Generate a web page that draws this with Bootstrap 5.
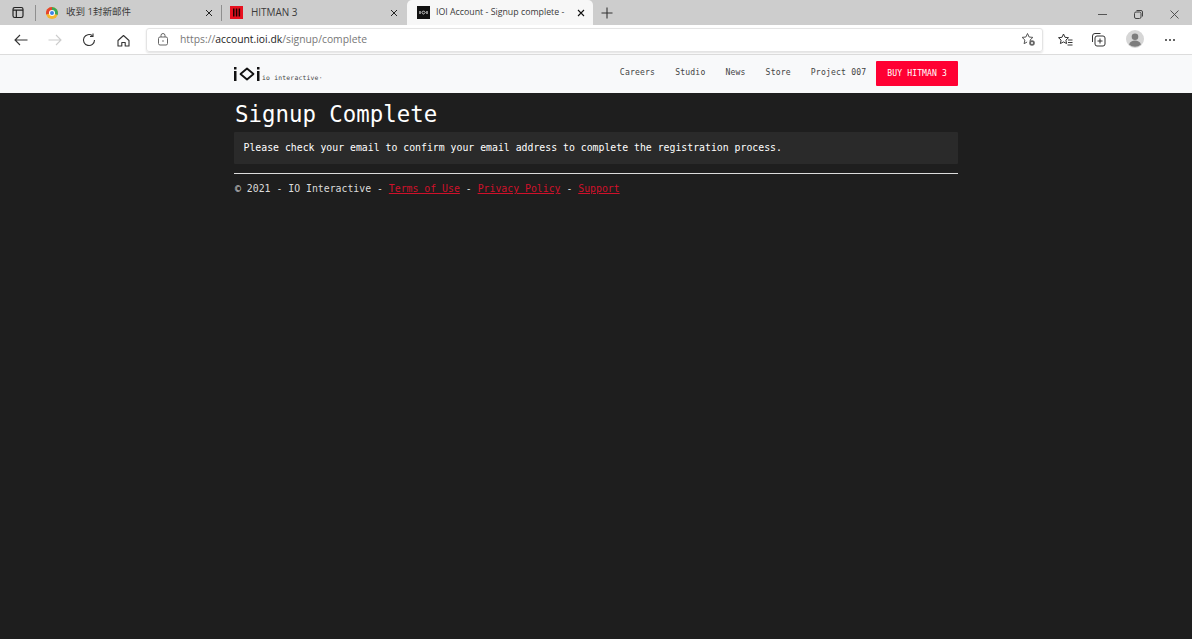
<!DOCTYPE html>
<html lang="en">
<head>
<meta charset="utf-8">
<title>IOI Account - Signup complete</title>
<link rel="stylesheet" href="https://cdn.jsdelivr.net/npm/bootstrap@5.3.0/dist/css/bootstrap.min.css">
<style>
html,body{height:100%}
body{background:#1e1e1e;font-family:"DejaVu Sans Mono","Liberation Mono",monospace;overflow:hidden}
.chrome{font-family:"Open Sans","Noto Sans","Noto Sans CJK SC",sans-serif;color:#333}
.tabbar{height:25px;background:#cdcdcd}
.winbtn{width:36px}
.tabsq{width:18px;margin-left:9px;margin-right:4px}
.vsep{width:1px;height:16px;background:#8f8f8f}
.browser-tab{height:25px;font-size:9.5px;color:#3b3b3b;white-space:nowrap}
.tab-a{width:185px;padding-left:9px;padding-right:8px}
.tab-b{width:185px;padding-left:8px;padding-right:9px;font-size:9.95px}
.tab-c{width:186px;padding-left:10px;padding-right:8px;background:#f7f7f7;border-radius:5px 5px 0 0;font-size:8.8px}
.tab-title{padding-left:7px;overflow:hidden}
.tab-title-wide{padding-left:8px}
.tab-title-c{padding-left:6px}
.toolbar{height:30px;background:#fff;border-bottom:1px solid #dcdcdc}
.tool{width:34px;flex:none;line-height:1;position:relative;top:-1px}
.tool-star{margin-left:5px}
.tool-coll{margin-left:-1px}
.tool-user{margin-left:3px}
.tool-more{margin-left:1px}
.addr{width:897px;height:24px;margin-left:6px;border:1px solid #e4e4e4;border-radius:3px;font-size:10.35px;color:#777;padding:0 6px 0 10px;box-shadow:0 1px 2px rgba(0,0,0,.12)}
.addr b{font-weight:400;color:#222}
.url-text{margin-left:11px}
.site-nav{height:38px;background:#f8f9fa}
.wrap{width:724px;margin:0 auto}
.logo-word{font-size:6.4px;color:#444;letter-spacing:.2px;margin-left:2px;margin-top:9px}
.site-links{padding-bottom:2px}
.site-link{font-size:8.1px;color:#444;text-decoration:none;margin-right:20px;letter-spacing:.17px;white-space:nowrap;line-height:10px;padding-bottom:2px}
.buy{background:#ff0033;color:#fff;font-size:8.1px;padding:0 11px;height:25px;line-height:25px;border-radius:1px;text-decoration:none;letter-spacing:.1px;margin-left:-10px;white-space:nowrap}
.page-title{font-size:22.4px;font-weight:400;color:#fff;line-height:28px;margin:7px 0 4px 1px;letter-spacing:0}
.msg{background:#2a2a2a;color:#fff;font-size:9.83px;height:32px;line-height:31px;padding-left:9.5px;border-radius:1px}
.rule{border:0;border-top:1px solid #dcdcdc;opacity:1;margin:9px 0 0}
.foot{font-size:9.83px;color:#dcdcdc;margin-top:9px;line-height:12px;padding-left:1px}
.foot a{color:#d0112b}
</style>
</head>
<body>
<div class="chrome">
  <div class="tabbar d-flex align-items-center">
    <svg class="tabsq" viewBox="0 0 18 18" height="15"><rect x="3" y="3" width="12" height="12" rx="2" fill="none" stroke="#222" stroke-width="1.400"/><path d="M3 6.200h12M7 6.200V15" stroke="#222" stroke-width="1.400"/></svg>
    <span class="vsep ms-1"></span>
    <div class="browser-tab tab-a d-flex align-items-center">
      <svg width="14" height="14" viewBox="0 0 14 14" class="flex-none"><circle cx="7" cy="7" r="6" fill="#f5b52e"/><path d="M7 1a6 6 0 0 1 5.600 8L7 7z" fill="#3aa757"/><path d="M1.200 8.500A6 6 0 0 1 7 1v6z" fill="#e5432e"/><circle cx="7" cy="7" r="3" fill="#fff"/><circle cx="7" cy="7" r="2" fill="#3b82e6"/></svg>
      <span class="tab-title flex-grow-1">收到 1封新邮件</span>
      <svg width="8" height="8" viewBox="0 0 8 8"><path d="M1 1l6 6M7 1L1 7" stroke="#222" stroke-width="1"/></svg>
    </div>
    <span class="vsep"></span>
    <div class="browser-tab tab-b d-flex align-items-center">
      <svg width="13" height="13" viewBox="0 0 13 13" class="flex-none"><rect width="13" height="13" fill="#e8101f"/><path d="M3 2.500h1.500v8H3zM5.800 2.500h1.500v8H5.800zM8.600 2.500h1.500v8H8.600z" fill="#200"/></svg>
      <span class="tab-title tab-title-wide flex-grow-1">HITMAN 3</span>
      <svg width="8" height="8" viewBox="0 0 8 8"><path d="M1 1l6 6M7 1L1 7" stroke="#222" stroke-width="1"/></svg>
    </div>
    <div class="browser-tab tab-c d-flex align-items-center">
      <svg width="13" height="13" viewBox="0 0 13 13" class="flex-none"><rect width="13" height="13" fill="#111"/><path d="M3 5v3M10 5v3" stroke="#fff"/><path d="M6.500 4.800l1.700 1.700-1.700 1.700-1.700-1.700z" fill="none" stroke="#fff" stroke-width=".8"/></svg>
      <span class="tab-title tab-title-c flex-grow-1">IOI Account - Signup complete -</span>
      <svg width="8" height="8" viewBox="0 0 8 8"><path d="M1 1l6 6M7 1L1 7" stroke="#111" stroke-width="1.100"/></svg>
    </div>
    <svg width="12" height="12" viewBox="0 0 12 12" class="ms-2"><path d="M6 .5v11M.5 6h11" stroke="#333" stroke-width="1.100"/></svg>
    <div class="ms-auto d-flex align-items-center">
      <div class="winbtn text-center"><svg width="9" height="9" viewBox="0 0 9 9"><path d="M0 4.500h9" stroke="#555"/></svg></div>
      <div class="winbtn text-center"><svg width="9" height="9" viewBox="0 0 9 9"><rect x=".5" y="2" width="6.500" height="6.500" rx="1.500" fill="none" stroke="#444"/><path d="M2.500 .5H7A1.500 1.500 0 0 1 8.500 2v4.500" fill="none" stroke="#444"/></svg></div>
      <div class="winbtn text-center"><svg width="9" height="9" viewBox="0 0 9 9"><path d="M.5.5l8 8M8.500.5l-8 8" stroke="#444" stroke-width=".9"/></svg></div>
    </div>
  </div>
  <div class="toolbar d-flex align-items-center ps-1">
    <div class="tool text-center"><svg width="14" height="12" viewBox="0 0 14 12"><path d="M13.500 6H1M6 1L1 6l5 5" fill="none" stroke="#333" stroke-width="1.100"/></svg></div>
    <div class="tool text-center"><svg width="14" height="12" viewBox="0 0 14 12"><path d="M.5 6H13M8 1l5 5-5 5" fill="none" stroke="#ccc" stroke-width="1.100"/></svg></div>
    <div class="tool text-center"><svg width="14" height="14" viewBox="0 0 14 14"><path d="M12.500 7A5.500 5.500 0 1 1 10.500 2.800" fill="none" stroke="#333" stroke-width="1.100"/><path d="M11 .5v3H8" fill="none" stroke="#333" stroke-width="1.100"/></svg></div>
    <div class="tool text-center"><svg width="13" height="13" viewBox="0 0 13 13"><path d="M1 6.500L6.500 1.500 12 6.500V12H8.200V8.500H4.800V12H1z" fill="none" stroke="#333" stroke-width="1.100" stroke-linejoin="round"/></svg></div>
    <div class="addr d-flex align-items-center">
      <svg width="12" height="13" viewBox="0 0 12 13"><rect x="1.500" y="4" width="9" height="8" rx="1.500" fill="none" stroke="#666"/><path d="M4 4V2.500a2 2 0 0 1 4 0V4" fill="none" stroke="#666"/><circle cx="6" cy="8" r=".8" fill="#666"/></svg>
      <span class="url-text">https://<b>account.ioi.dk</b>/signup/complete</span>
      <svg class="ms-auto" width="15" height="15" viewBox="0 0 15 15"><path d="M6.500 1.500l1.600 3.500 3.800.4-2.800 2.600.7 3.700" fill="none" stroke="#555"/><path d="M6.500 1.500L4.900 5l-3.800.4L3.900 8l-.8 3.700 3-1.700" fill="none" stroke="#555"/><circle cx="11" cy="11" r="2.800" fill="#666"/><circle cx="11" cy="11" r="1" fill="#fff"/></svg>
    </div>
    <div class="tool tool-star text-center"><svg width="15" height="14" viewBox="0 0 15 14"><path d="M5.500 1l1.500 3.300 3.500.4-2.600 2.400.7 3.500-3.100-1.700-3.100 1.700.7-3.500L.5 4.700 4 4.300z" fill="none" stroke="#333"/><path d="M10 7h4.500M10 9.500h4.500M9.500 12h5" stroke="#333"/></svg></div>
    <div class="tool tool-coll text-center"><svg width="15" height="15" viewBox="0 0 15 15"><rect x="4" y="4" width="10" height="10" rx="2" fill="none" stroke="#333"/><path d="M9 6.500v5M6.500 9h5" stroke="#333"/><path d="M1.500 10V4A2.500 2.500 0 0 1 4 1.500h5.500" fill="none" stroke="#333"/></svg></div>
    <div class="tool tool-user text-center"><svg width="18" height="18" viewBox="0 0 18 18"><circle cx="9" cy="9" r="9" fill="#d6d6d6"/><circle cx="9" cy="6.800" r="3.300" fill="#7d7d7d"/><path d="M3 14.500c1-3 3.500-4 6-4s5 1 6 4a9 9 0 0 1-12 0z" fill="#7d7d7d"/></svg></div>
    <div class="tool tool-more text-center"><svg width="12" height="4" viewBox="0 0 12 4"><circle cx="2" cy="2" r="1" fill="#333"/><circle cx="6" cy="2" r="1" fill="#333"/><circle cx="10" cy="2" r="1" fill="#333"/></svg></div>
  </div>
</div>
<nav class="site-nav">
  <div class="wrap h-100 d-flex align-items-center">
    <svg width="26" height="14" viewBox="0 0 26 14" aria-label="IOI"><rect x="0" y="4" width="2.500" height="10" fill="#111"/><rect x="0" y="0" width="2.500" height="2.500" fill="#111"/><path d="M13 1.500L19.500 7 13 12.500 6.500 7z" fill="none" stroke="#111" stroke-width="1.800" stroke-linejoin="round"/><rect x="23" y="4" width="2.500" height="10" fill="#111"/><rect x="23" y="0" width="2.500" height="2.500" fill="#111"/></svg>
    <span class="logo-word">io interactive·</span>
    <div class="ms-auto d-flex align-items-center site-links">
      <a class="site-link" href="#">Careers</a><a class="site-link" href="#">Studio</a><a class="site-link" href="#">News</a><a class="site-link" href="#">Store</a><a class="site-link" href="#">Project 007</a><a class="buy" href="#">BUY HITMAN 3</a>
    </div>
  </div>
</nav>
<main class="wrap">
  <h1 class="page-title">Signup Complete</h1>
  <div class="msg">Please check your email to confirm your email address to complete the registration process.</div>
  <hr class="rule">
  <p class="foot mb-0">© 2021 - IO Interactive - <a href="#">Terms of Use</a> - <a href="#">Privacy Policy</a> - <a href="#">Support</a></p>
</main>
</body>
</html>
